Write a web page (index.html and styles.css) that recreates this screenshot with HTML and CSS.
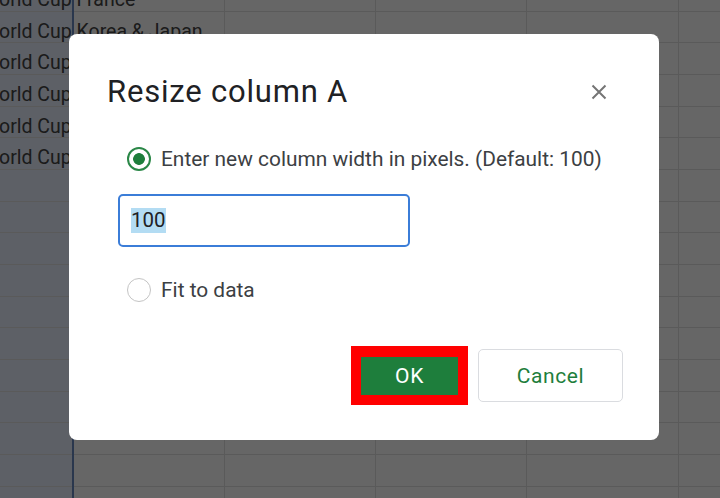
FILE: index.html
```html
<!DOCTYPE html>
<html lang="en">
  <head>
    <meta charset="UTF-8" />
    <link rel="stylesheet" href="styles.css">
  </head>
  <body>
    <div class="sheet">
      <div class="col col-a">
        <div class="cell">World Cup France</div>
        <div class="cell">World Cup Korea &amp; Japan</div>
        <div class="cell">World Cup Germany</div>
        <div class="cell">World Cup South Africa</div>
        <div class="cell">World Cup Brazil</div>
        <div class="cell">World Cup Russia</div>
      </div>
      <div class="col col-b"></div>
      <div class="col col-b"></div>
      <div class="col col-b"></div>
      <div class="col col-e"></div>
      <div class="col col-f"></div>
    </div>

    <div class="backdrop"></div>

    <div class="dialog">
      <div class="dialog-head">
        <h1 class="title">Resize column A</h1>
        <button class="close" aria-label="Close">
          <svg width="16" height="16" viewBox="0 0 16 16">
            <path d="M1.5 1.5 L14.5 14.5 M14.5 1.5 L1.5 14.5" stroke="#757575" stroke-width="2" fill="none" />
          </svg>
        </button>
      </div>

      <label class="option option-first">
        <span class="radio radio-on"></span>
        <span>Enter new column width in pixels. (Default: 100)</span>
      </label>

      <div class="field">
        <span class="selected">100</span>
      </div>

      <label class="option option-second">
        <span class="radio"></span>
        <span>Fit to data</span>
      </label>

      <div class="actions">
        <div class="mark">
          <button class="btn btn-ok">OK</button>
        </div>
        <button class="btn btn-cancel">Cancel</button>
      </div>
    </div>
  </body>
</html>
```

FILE: styles.css
```css
body {
  margin: 0;
  width: 720px;
  height: 498px;
  overflow: hidden;
  font-family: Roboto, "Liberation Sans", sans-serif;
  background: #fff;
}
.sheet {
  display: flex;
  margin-top: -19.7px;
  height: 540px;
}
.col {
  height: 100%;
  box-sizing: border-box;
  border-right: 1px solid #e2e2e2;
  background: repeating-linear-gradient(
    to bottom,
    transparent 0,
    transparent 30.67px,
    #e2e2e2 30.67px,
    #e2e2e2 31.67px
  );
}
.col-a {
  width: 74px;
  background-color: #e8f0fe;
  border-right: 2px solid #6a8ac0;
}
.col-b {
  width: 151px;
}
.col-e {
  width: 152px;
}
.col-f {
  flex: 1;
  border-right: none;
}
.cell {
  height: 31.67px;
  display: flex;
  align-items: flex-end;
  box-sizing: border-box;
  padding-bottom: 1px;
  white-space: nowrap;
  text-indent: -18px;
  font-size: 19.5px;
  line-height: 22px;
  color: #444;
}
.backdrop {
  position: absolute;
  inset: 0;
  background: rgba(0, 0, 0, 0.6);
}
.dialog {
  position: absolute;
  left: 69px;
  top: 34px;
  width: 590px;
  height: 406px;
  box-sizing: border-box;
  padding: 40px 36px 0 38px;
  background: #fff;
  border-radius: 8px;
  color: #3c4043;
}
.dialog-head {
  display: flex;
  justify-content: space-between;
  align-items: center;
}
.title {
  margin: 0;
  font-size: 31px;
  line-height: 36px;
  font-weight: 400;
  color: #202124;
  letter-spacing: 0.8px;
}
.close {
  border: none;
  background: none;
  padding: 0;
  margin-right: 16px;
  width: 16px;
  height: 16px;
  display: flex;
}
.option {
  display: flex;
  align-items: center;
  gap: 10px;
  margin-left: 20px;
  font-size: 20.9px;
  line-height: 24px;
}
.option-first {
  margin-top: 37px;
}
.option-second {
  margin-top: 31px;
}
.radio {
  width: 24px;
  height: 24px;
  flex: none;
  box-sizing: border-box;
  border-radius: 50%;
  border: 1px solid #c4c4c4;
}
.radio-on {
  border: 2.5px solid #2a8747;
  background: radial-gradient(circle, #1e7e3c 5.5px, #fff 6.2px);
}
.field {
  margin: 23px 0 0 11px;
  width: 292px;
  height: 53px;
  box-sizing: border-box;
  border: 2px solid #3b7dd8;
  border-radius: 5px;
  padding-left: 11px;
  display: flex;
  align-items: center;
  font-size: 20.5px;
  color: #202124;
}
.selected {
  background: #b3dcf3;
  line-height: 25px;
}
.actions {
  margin-top: 44px;
  display: flex;
  justify-content: flex-end;
  align-items: center;
  gap: 10px;
}
.mark {
  background: #ff0000;
  padding: 11px 10px 10px 10px;
  display: flex;
}
.btn {
  font-family: Roboto, "Liberation Sans", sans-serif;
  font-size: 21px;
  font-weight: 400;
  letter-spacing: 0.6px;
  cursor: pointer;
}
.btn-ok {
  width: 97px;
  height: 38px;
  border: none;
  background: #1e7e3c;
  color: #fff;
}
.btn-cancel {
  width: 145px;
  height: 53px;
  border: 1px solid #dadce0;
  border-radius: 5px;
  background: #fff;
  color: #1e7e3c;
}
```
